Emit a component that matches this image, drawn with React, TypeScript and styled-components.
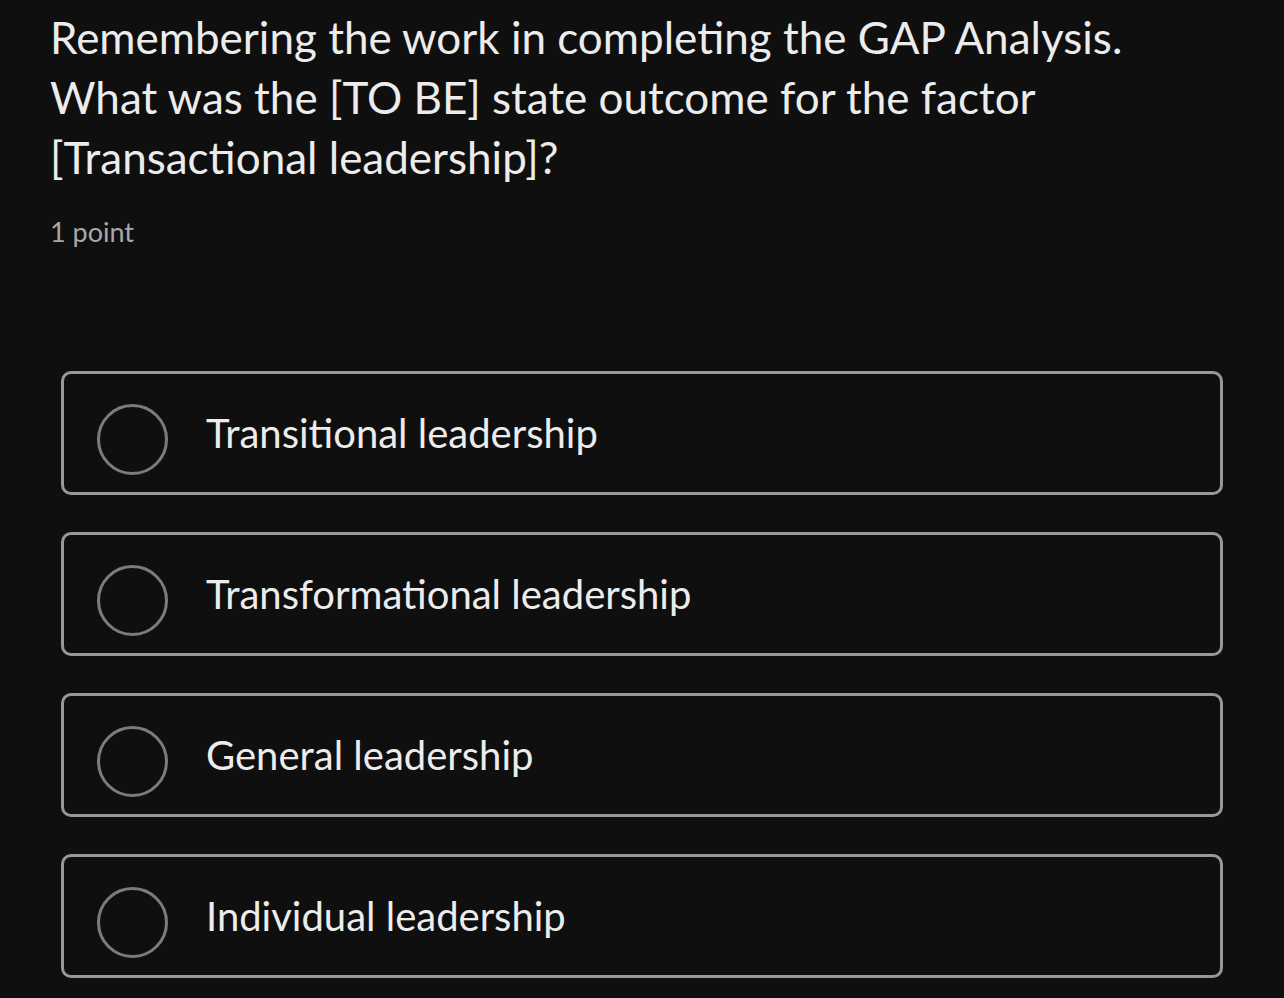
import React from "react"
import styled, { createGlobalStyle } from "styled-components"

const GlobalStyle = createGlobalStyle`
  html, body {
    margin: 0;
    padding: 0;
    background: #0f0f0f;
  }
  body {
    font-family: Lato, "Liberation Sans", sans-serif;
  }
`

const Page = styled.div`
  min-height: 998px;
  background: #0f0f0f;
  padding: 7px 50px 0 50px;
  box-sizing: border-box;
`

const Question = styled.h1`
  margin: 0;
  font-size: 44px;
  font-weight: 400;
  line-height: 60px;
  color: #ececec;
  max-width: 1180px;
`

const Points = styled.div`
  margin-top: 27px;
  font-size: 27px;
  line-height: 36px;
  color: #a8a8a8;
`

const Options = styled.div`
  margin: 121px 11px 0 11px;
  display: flex;
  flex-direction: column;
  gap: 37px;
`

const Option = styled.label`
  display: flex;
  align-items: center;
  height: 124px;
  box-sizing: border-box;
  border: 3px solid #98989c;
  border-radius: 10px;
  padding-left: 33px;
  cursor: pointer;
`

const Radio = styled.span`
  width: 71px;
  height: 71px;
  margin-top: 12px;
  box-sizing: border-box;
  border: 3px solid #7c7c7c;
  border-radius: 50%;
  flex-shrink: 0;
`

const OptionText = styled.span`
  margin-left: 38px;
  font-size: 40px;
  color: #ececec;
`

const options = [
  "Transitional leadership",
  "Transformational leadership",
  "General leadership",
  "Individual leadership",
]

export default function App() {
  return (
    <Page>
      <GlobalStyle />
      <Question>
        Remembering the work in completing the GAP Analysis. What was the [TO
        BE] state outcome for the factor [Transactional leadership]?
      </Question>
      <Points>1 point</Points>
      <Options>
        {options.map(o => (
          <Option key={o}>
            <Radio />
            <OptionText>{o}</OptionText>
          </Option>
        ))}
      </Options>
    </Page>
  )
}
